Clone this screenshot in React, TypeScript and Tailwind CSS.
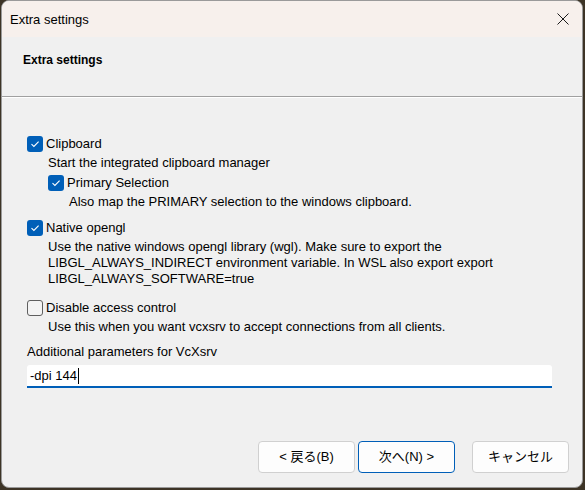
import React from "react";

const font = { fontFamily: '"Liberation Sans", Arial, sans-serif' };
const jpFont = { fontFamily: '"Liberation Sans", "Noto Sans CJK JP", sans-serif' };

function Check({ checked }: { checked: boolean }) {
  if (!checked) {
    return (
      <span className="w-4 h-4 shrink-0 rounded-[3px] border border-[#5f5f5f] bg-[#f3f3f3]" />
    );
  }
  return (
    <span className="w-4 h-4 shrink-0 rounded-[3px] bg-[#005fb8] flex items-center justify-center">
      <svg width="10" height="8" viewBox="0 0 10 8" fill="none">
        <path d="M1.5 4.2 L3.9 6.4 L8.6 1.6" stroke="#fff" strokeWidth="1.1" />
      </svg>
    </span>
  );
}

function Option({
  checked,
  label,
  className,
}: {
  checked: boolean;
  label: string;
  className?: string;
}) {
  return (
    <div className={"flex items-center gap-[3px] h-4 " + (className ?? "")}>
      <Check checked={checked} />
      <span className="leading-4">{label}</span>
    </div>
  );
}

export default function App() {
  return (
    <div
      className="w-[585px] h-[490px] bg-[#3d3426] pl-px pr-[2px] pb-[2px] text-[13px] text-black"
      style={font}
    >
      <div className="w-full h-[488px] rounded-lg border border-[#9a9a9a] bg-[#f0f0f0] overflow-hidden flex flex-col">
        {/* title bar */}
        <div className="h-[36px] bg-[#f7f0ec] flex items-center justify-between pl-[8px] pr-[13px]">
          <span className="text-[13px] pt-[2px]">Extra settings</span>
          <svg width="12" height="12" viewBox="0 0 12 12">
            <path d="M0.5 0.5 L11.5 11.5 M11.5 0.5 L0.5 11.5" stroke="#1a1a1a" strokeWidth="1" />
          </svg>
        </div>

        {/* header */}
        <div className="h-[59px] pl-[21px] pt-[13px]">
          <span className="text-[12px] font-bold leading-4">Extra settings</span>
        </div>
        <div className="h-px bg-[#a0a0a0]" />
        <div className="h-px bg-white" />

        {/* body */}
        <div className="pl-[25px] pt-[38px] flex flex-col">
          <Option checked label="Clipboard" />
          <div className="pl-[21px] mt-[2px] leading-[17px]">
            Start the integrated clipboard manager
          </div>
          <Option checked label="Primary Selection" className="ml-[21px] mt-[4px]" />
          <div className="pl-[42px] mt-[2px] leading-[17px]">
            Also map the PRIMARY selection to the windows clipboard.
          </div>

          <Option checked label="Native opengl" className="mt-[10px]" />
          <div className="pl-[21px] mt-[3px] leading-4">
            <div>Use the native windows opengl library (wgl). Make sure to export the</div>
            <div>LIBGL_ALWAYS_INDIRECT environment variable. In WSL also export export</div>
            <div>LIBGL_ALWAYS_SOFTWARE=true</div>
          </div>

          <Option checked={false} label="Disable access control" className="mt-[13px]" />
          <div className="pl-[21px] mt-[3px] leading-4">
            Use this when you want vcxsrv to accept connections from all clients.
          </div>

          <div className="mt-[9px] leading-4">Additional parameters for VcXsrv</div>
          <div className="mt-[5px] w-[525px] h-[23px] bg-white border-b-2 border-[#005fb8] rounded-t-[3px] flex items-center pl-[3px]">
            <span>-dpi 144</span>
            <span className="w-px h-[16px] bg-black ml-px" />
          </div>
        </div>

        {/* buttons */}
        <div className="mt-auto mb-[14px] pr-[13px] flex justify-end">
          <button className="w-[97px] h-[32px] rounded-[4px] border border-[#d0d0d0] bg-[#fdfdfd] text-[13px]" style={jpFont}>
            &lt; 戻る(B)
          </button>
          <button className="ml-[3px] w-[97px] h-[32px] rounded-[4px] border border-[#005fb8] bg-[#fdfdfd] text-[13px]" style={jpFont}>
            次へ(N) &gt;
          </button>
          <button className="ml-[17px] w-[97px] h-[32px] rounded-[4px] border border-[#d0d0d0] bg-[#fdfdfd] text-[13px]" style={jpFont}>
            キャンセル
          </button>
        </div>
      </div>
    </div>
  );
}
